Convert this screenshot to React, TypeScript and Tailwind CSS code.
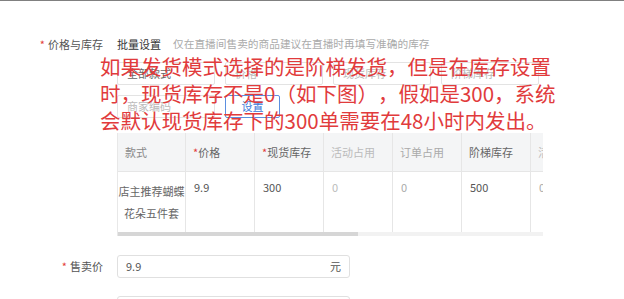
import React from "react";

const font = { fontFamily: '"Noto Sans CJK SC", "Noto Sans", sans-serif' };

function Box({ text, dark }: { text: string; dark?: boolean }) {
  return (
    <div
      className={`h-[23px] w-[98px] border border-[#e3e3e3] rounded-[2px] flex items-center pl-[9px] text-[11px] ${
        dark ? "text-[#666]" : "text-[#bbb]"
      }`}
    >
      {text}
    </div>
  );
}

const cols = [
  { h: "款式", req: false, hc: "text-[#888]", w: "w-[68px]" },
  { h: "价格", req: true, hc: "text-[#666]", w: "w-[69px]" },
  { h: "现货库存", req: true, hc: "text-[#666]", w: "w-[69px]" },
  { h: "活动占用", req: false, hc: "text-[#bbb]", w: "w-[69px]" },
  { h: "订单占用", req: false, hc: "text-[#aaa]", w: "w-[69px]" },
  { h: "阶梯库存", req: false, hc: "text-[#666]", w: "w-[69px]" },
  { h: "活动占用", req: false, hc: "text-[#bbb]", w: "w-[69px]" },
];

const vals = [
  { v: "9.9", c: "text-[#555]" },
  { v: "300", c: "text-[#555]" },
  { v: "0", c: "text-[#bbb]" },
  { v: "0", c: "text-[#aaa]" },
  { v: "500", c: "text-[#555]" },
  { v: "0", c: "text-[#aaa]" },
];

export default function App() {
  return (
    <div
      className="relative w-[624px] h-[299px] overflow-hidden bg-white border-t border-[#808080]"
      style={font}
    >
      <div className="pt-[33px]">
        {/* header row */}
        <div className="flex items-center h-[20px]">
          <div className="w-[103px] text-right text-[11px] text-[#555]">
            <span className="text-[#e33b3b] mr-[3px]">*</span>价格与库存
          </div>
          <div className="ml-[14px] text-[11px] text-[#333]">批量设置</div>
          <div className="ml-[12px] text-[10.7px] text-[#aaa]">
            仅在直播间售卖的商品建议在直播时再填写准确的库存
          </div>
        </div>

        <div className="ml-[117px]">
          <div className="mt-[8px] flex gap-[10px]">
            <Box text="全部款式" dark />
            <Box text="价格" />
            <Box text="现货库存" />
            <Box text="阶梯库存" />
          </div>
          <div className="mt-[10px] flex gap-[10px]">
            <Box text="商家编码" />
            <div className="h-[23px] w-[55px] border border-[#5b8fe0] rounded-[2px] flex items-center justify-center text-[11px] text-[#3a78d8]">
              设置
            </div>
          </div>

          {/* table */}
          <div className="mt-[15px] w-[426px] overflow-hidden border-l border-[#e8e8e8]">
            <div className="flex w-[483px] h-[39px] bg-[#f4f5f6] border-b border-[#e6e6e6]">
              {cols.map((c, i) => (
                <div
                  key={i}
                  className={`${c.w} shrink-0 border-r border-[#e6e6e6] flex items-center pl-[7px] text-[11px] ${c.hc}`}
                >
                  {c.req && <span className="text-[#e33b3b]">*</span>}
                  {c.h}
                </div>
              ))}
            </div>
            <div className="flex w-[483px] h-[60px]">
              <div className="w-[68px] shrink-0 border-r border-[#e6e6e6] flex items-center justify-center text-center text-[11px] leading-[22px] text-[#666]">
                店主推荐蝴蝶
                <br />
                花朵五件套
              </div>
              {vals.map((v, i) => (
                <div
                  key={i}
                  className={`w-[69px] shrink-0 border-r border-[#e6e6e6] pl-[8px] pt-[7px] text-[11px] ${v.c}`}
                >
                  {v.v}
                </div>
              ))}
            </div>
            <div className="h-[4px] bg-[#f2f2f2]">
              <div className="h-[4px] w-[240px] bg-[#d6d6d6]" />
            </div>
          </div>
        </div>

        {/* 售卖价 */}
        <div className="mt-[19px] flex items-center">
          <div className="w-[103px] text-right text-[11px] text-[#555]">
            <span className="text-[#e33b3b] mr-[3px]">*</span>售卖价
          </div>
          <div className="ml-[14px] h-[23px] w-[233px] border border-[#e0e0e0] rounded-[3px] flex items-center justify-between px-[8px] text-[11px] text-[#555]">
            <span>9.9</span>
            <span>元</span>
          </div>
        </div>
        <div className="mt-[18px] ml-[117px] h-[23px] w-[233px] border border-[#e0e0e0] rounded-[3px]" />
      </div>

      {/* red annotation overlay */}
      <div className="absolute left-[100px] top-[52px] text-[20.5px] leading-[27px] text-[#e13b3c] whitespace-nowrap [text-spacing-trim:space-all]">
        <div>如果发货模式选择的是阶梯发货，但是在库存设置</div>
        <div>时，现货库存不是0（如下图），假如是300，系统</div>
        <div>会默认现货库存下的300单需要在48小时内发出。</div>
      </div>
    </div>
  );
}
